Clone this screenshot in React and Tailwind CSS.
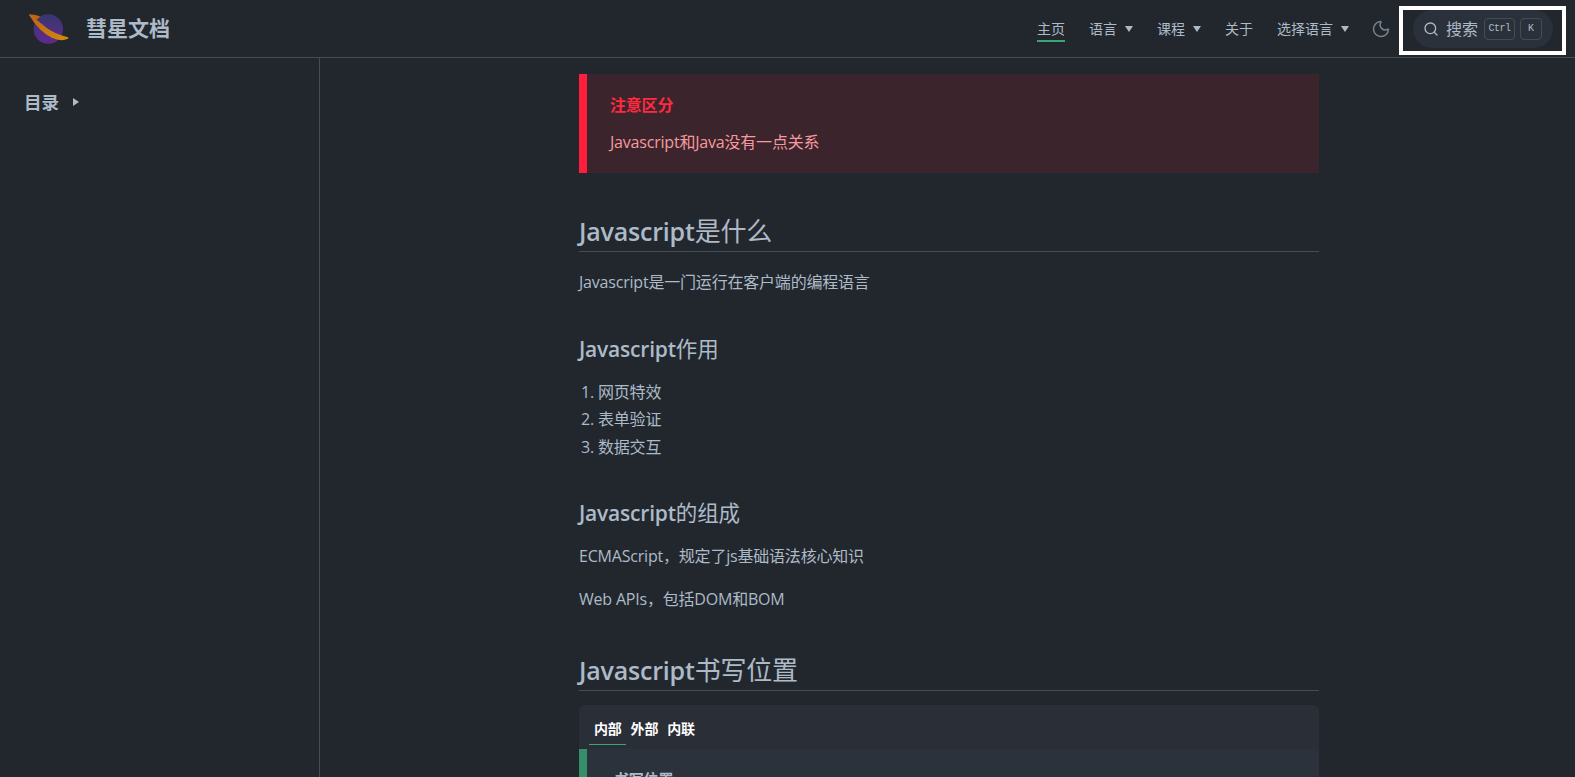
import React from 'react';
import { Moon, Search } from 'lucide-react';

const font = 'font-["Open_Sans","Noto_Sans_CJK_SC",sans-serif]';

const Caret = () => (
  <span className="ml-2 inline-block w-0 h-0 border-x-[4px] border-x-transparent border-t-[6px] border-t-[#adbac7]" />
);

const NavItem = ({ label, caret, active }) => (
  <div className={`flex items-center py-[1px] border-y-2 border-t-transparent text-[14px] leading-[20px] ${active ? 'border-b-[#3aa675]' : 'border-b-transparent'}`}>
    {label}
    {caret && <Caret />}
  </div>
);

const Logo = () => (
  <svg width="60" height="50" viewBox="0 0 60 50" className="mt-[2px]">
    <defs>
      <linearGradient id="planet" x1="0" y1="0" x2="0" y2="1">
        <stop offset="0" stopColor="#37386f" />
        <stop offset="1" stopColor="#60298d" />
      </linearGradient>
      <linearGradient id="ring" x1="0" y1="0" x2="1" y2="0">
        <stop offset="0" stopColor="#c4640f" />
        <stop offset="1" stopColor="#d08a10" />
      </linearGradient>
    </defs>
    <g transform="translate(28.6 22) rotate(30)">
      <path d="M-22 -1 Q-15 -5 -6 -4.5 L-6 -1 Q-15 -1 -22 -1 Z" fill="#c4640f" stroke="#c4640f" strokeWidth="1.5" strokeLinejoin="round" />
    </g>
    <circle cx="28.3" cy="24" r="14.7" fill="url(#planet)" />
    <g transform="translate(28.6 22) rotate(30)">
      <path d="M-22 -1 Q-6 8 8 7 Q18 6 22 0 Q8 4 -2 2.5 Q-12 1 -22 -1 Z" fill="url(#ring)" stroke="url(#ring)" strokeWidth="1.5" strokeLinejoin="round" />
    </g>
  </svg>
);

const Heading2 = ({ latin, cjk, className }) => (
  <h2 className={`${className} text-[26px] leading-[40px] border-b border-[#444c56] h-[41px] font-normal`}>
    <span className="text-[25px] font-semibold">{latin}</span>
    {cjk}
  </h2>
);

const Heading3 = ({ latin, cjk, className }) => (
  <h3 className={`${className} text-[21.5px] leading-[30px] font-normal`}>
    <span className="text-[21px] font-semibold">{latin}</span>
    {cjk}
  </h3>
);

const Tab = ({ label, active }) => (
  <span className={`pl-[5px] pr-[4px] pt-[14px] pb-[5px] leading-[20px] border-b ${active ? 'border-[#3aa675]' : 'border-transparent'}`}>
    {label}
  </span>
);

const App = () => (
  <div className={`h-[777px] overflow-hidden bg-[#22272e] text-[#adbac7] ${font}`}>
    <header className="h-[58px] border-b border-[#444c56] flex items-center pl-[20px] pr-[9px]">
      <Logo />
      <div className="ml-[6px] mt-[1px] text-[21px] font-bold text-[#adbac7]">彗星文档</div>
      <nav className="ml-auto flex items-center gap-[24px]">
        <NavItem label="主页" active />
        <NavItem label="语言" caret />
        <NavItem label="课程" caret />
        <NavItem label="关于" />
        <NavItem label="选择语言" caret />
        <Moon size={20} strokeWidth={1.75} className="-ml-[2px] text-[#768390]" />
      </nav>
      <div className="ml-[8px] mt-[4px] w-[167px] h-[49px] border-[4px] border-white">
        <div className="ml-[10px] w-[140px] h-[38px] rounded-full bg-[#2b313a] flex items-center pl-[10px]">
          <Search size={16} className="text-[#adbac7] shrink-0" />
          <span className="ml-[7px] text-[16px]">搜索</span>
          <kbd className="ml-[6px] w-[31px] h-[22px] text-center rounded-[4px] border border-[#444c56] text-[10px] tracking-[-0.5px] leading-[20px] font-['Liberation_Mono',monospace]">Ctrl</kbd>
          <kbd className="ml-[5px] w-[22px] h-[22px] text-center rounded-[4px] border border-[#444c56] text-[10px] leading-[20px] font-['Liberation_Mono',monospace]">K</kbd>
        </div>
      </div>
    </header>

    <div className="flex">
      <aside className="w-[320px] h-[719px] shrink-0 border-r border-[#444c56] pl-[24px] pt-[32px]">
        <div className="flex items-center text-[17.6px] font-bold leading-[24px]">
          目录
          <span className="ml-[14px] w-0 h-0 border-y-[4px] border-y-transparent border-l-[6px] border-l-[#adbac7]" />
        </div>
      </aside>

      <main className="w-[740px] ml-[259px] pt-[16px] text-[16px] leading-[27.2px] tracking-[-0.2px]">
        <div className="h-[99px] border-l-[8px] border-[#ff1f3d] bg-[#3b242c] pl-[23px] pt-[18px]">
          <p className="font-bold text-[#ff2a40]">注意区分</p>
          <p className="mt-[10px] text-[#f69a9f]">Javascript和Java没有一点关系</p>
        </div>

        <Heading2 className="mt-[38px]" latin="Javascript" cjk="是什么" />
        <p className="mt-[17px]">Javascript是一门运行在客户端的编程语言</p>

        <Heading3 className="mt-[38px]" latin="Javascript" cjk="作用" />
        <ol className="mt-[15px] list-decimal pl-[19px]">
          <li>网页特效</li>
          <li>表单验证</li>
          <li>数据交互</li>
        </ol>

        <Heading3 className="mt-[37px]" latin="Javascript" cjk="的组成" />
        <p className="mt-[15px]">ECMAScript，规定了js基础语法核心知识</p>
        <p className="mt-[16px]">Web APIs，包括DOM和BOM</p>

        <Heading2 className="mt-[37px]" latin="Javascript" cjk="书写位置" />

        <div className="mt-[14px] rounded-t-[6px] bg-[#2a2e37] overflow-hidden">
          <div className="h-[44px] flex items-start pl-[10px] text-[14px] font-bold text-white">
            <Tab label="内部" active />
            <Tab label="外部" />
            <Tab label="内联" />
          </div>
          <div className="h-[80px] border-l-[8px] border-[#35906a] bg-[#2c323c] pl-[27px] pt-[17px] text-[15px] font-bold">
            书写位置
          </div>
        </div>
      </main>
    </div>
  </div>
);

export default App;
